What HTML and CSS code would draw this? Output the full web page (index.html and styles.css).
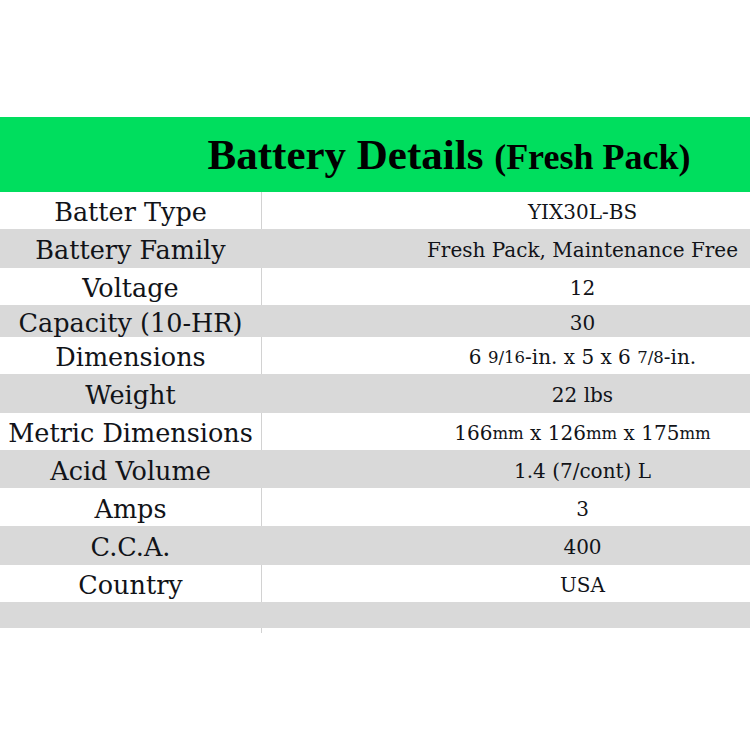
FILE: index.html
```html
<!DOCTYPE html>
<html>
<head>
<meta charset="utf-8">
<link rel="stylesheet" href="styles.css">
</head>
<body>
<div class="page">
  <div class="banner">
    <h1 class="title">Battery Details <span class="title-sub">(Fresh Pack)</span></h1>
  </div>
  <div class="table">
    <div class="row h37"><div class="label">Batter Type</div><div class="value">YIX30L-BS</div></div>
    <div class="row alt h39"><div class="label">Battery Family</div><div class="value">Fresh Pack, Maintenance Free</div></div>
    <div class="row h37"><div class="label">Voltage</div><div class="value">12</div></div>
    <div class="row alt h32"><div class="label">Capacity (10-HR)</div><div class="value">30</div></div>
    <div class="row h37"><div class="label">Dimensions</div><div class="value">6&nbsp;<span class="small">9/16</span>-in. x 5 x 6&nbsp;<span class="small">7/8</span>-in.</div></div>
    <div class="row alt h39"><div class="label">Weight</div><div class="value">22 lbs</div></div>
    <div class="row h37"><div class="label">Metric Dimensions</div><div class="value">166<span class="small">mm</span>&nbsp;x 126<span class="small">mm</span>&nbsp;x 175<span class="small">mm</span></div></div>
    <div class="row alt h38"><div class="label">Acid Volume</div><div class="value">1.4 (7/cont) L</div></div>
    <div class="row h38"><div class="label">Amps</div><div class="value">3</div></div>
    <div class="row alt h39"><div class="label">C.C.A.</div><div class="value">400</div></div>
    <div class="row h37"><div class="label">Country</div><div class="value">USA</div></div>
    <div class="row alt h26"><div class="label"></div><div class="value"></div></div>
    <div class="row h5"><div class="label"></div><div class="value"></div></div>
  </div>
</div>
</body>
</html>
```

FILE: styles.css
```css
html, body {
  margin: 0;
  padding: 0;
  background: #ffffff;
}

.page {
  width: 750px;
  height: 750px;
  padding-top: 117px;
  box-sizing: border-box;
  color: #111318;
}

.banner {
  height: 75px;
  background: #00de5e;
  display: flex;
  align-items: center;
  justify-content: center;
  padding-left: 148px;
  box-sizing: border-box;
}

.title {
  margin: 0;
  font-family: "Liberation Serif", serif;
  font-weight: bold;
  font-size: 43px;
  line-height: 1;
  color: #000;
  white-space: nowrap;
}

.title-sub {
  font-size: 36px;
}

.table {
  display: flex;
  flex-direction: column;
}

.row {
  display: grid;
  grid-template-columns: 261px 1fr;
  background: #ffffff;
}

.row.alt {
  background: #d9d9d9;
}

.h37 { height: 37px; }
.h39 { height: 39px; }
.h38 { height: 38px; }
.h32 { height: 32px; }
.h26 { height: 26px; }
.h5 { height: 5px; }

.label {
  display: flex;
  align-items: center;
  justify-content: center;
  padding-top: 3px;
  font-family: "DejaVu Serif", serif;
  font-size: 25.5px;
  white-space: nowrap;
}

.value {
  display: flex;
  align-items: center;
  justify-content: center;
  padding-left: 153px;
  padding-top: 3px;
  border-left: 1px solid #d2d2d2;
  font-family: "DejaVu Serif", serif;
  font-size: 20px;
  white-space: pre;
}

.row.alt .value {
  border-left-color: transparent;
}

.value .small {
  font-size: 16.5px;
}
```
